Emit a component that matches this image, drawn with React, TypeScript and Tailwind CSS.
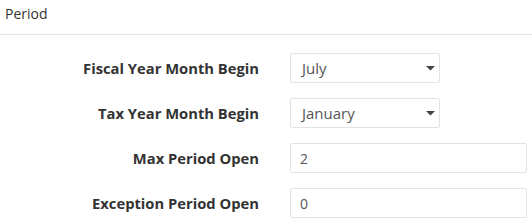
export default function App() {
  const font = { fontFamily: '"Open Sans", sans-serif' };
  const Caret = () => (
    <svg width="9" height="5" viewBox="0 0 9 5" className="absolute right-[4px] top-[12px]">
      <path d="M0 0 L9 0 L4.5 4.5 Z" fill="#444" />
    </svg>
  );
  return (
    <div className="w-[532px] h-[223px] bg-white text-[#333]" style={font}>
      <div className="h-[35px] border-b border-[#e5e5e5] pl-[5px] pt-[3px] text-[14px] text-[#333]">
        Period
      </div>
      <div className="flex flex-col gap-[15px] pt-[18px] pr-[5px]">
        <div className="flex items-center">
          <div className="w-[259px] text-right text-[14.75px] font-bold">Fiscal Year Month Begin</div>
          <div className="ml-[31px] relative w-[150px] h-[30px] border border-[#e3e3e3] rounded-[2px] pl-[11px] flex items-center text-[15px] text-[#555]">
            July
            <Caret />
          </div>
        </div>
        <div className="flex items-center">
          <div className="w-[259px] text-right text-[14.75px] font-bold">Tax Year Month Begin</div>
          <div className="ml-[31px] relative w-[150px] h-[30px] border border-[#e3e3e3] rounded-[2px] pl-[11px] flex items-center text-[15px] text-[#555]">
            January
            <Caret />
          </div>
        </div>
        <div className="flex items-center">
          <div className="w-[259px] text-right text-[14.75px] font-bold">Max Period Open</div>
          <div className="ml-[31px] flex-1 h-[30px] border border-[#e3e3e3] rounded-[2px] pl-[9px] flex items-center text-[14px] text-[#555]">
            2
          </div>
        </div>
        <div className="flex items-center">
          <div className="w-[259px] text-right text-[14.75px] font-bold">Exception Period Open</div>
          <div className="ml-[31px] flex-1 h-[30px] border border-[#e3e3e3] rounded-[2px] pl-[9px] flex items-center text-[14px] text-[#555]">
            0
          </div>
        </div>
      </div>
    </div>
  );
}
